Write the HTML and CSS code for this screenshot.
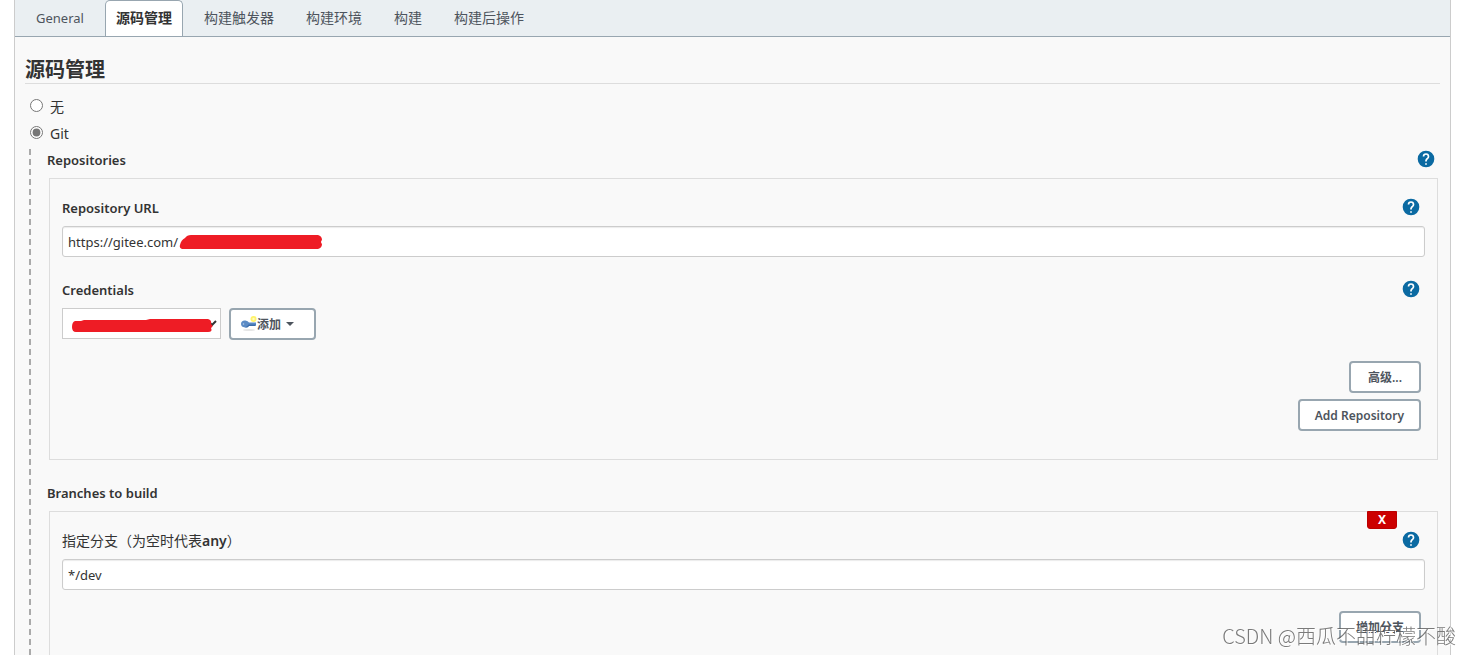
FILE: index.html
```
<!DOCTYPE html>
<html lang="zh-CN">
<head>
    <meta charset="UTF-8">
    <meta name="viewport" content="width=device-width, initial-scale=1.0">
    <title>源码管理</title>
    <link rel="stylesheet" href="styles.css">
</head>
<body>
    <svg class="sprite" aria-hidden="true">
        <symbol id="icon-help" viewBox="0 0 24 24">
            <path fill="#0b6aa2" d="M12 2a10 10 0 1 0 0 20 10 10 0 0 0 0-20z"/>
            <path fill="#fff" d="M11 17h2v2h-2zM12 5a4 4 0 0 0-4 4h2a2 2 0 1 1 4 0c0 2-3 1.750-3 6h2c0-2.750 3-3 3-6a4 4 0 0 0-4-4z"/>
        </symbol>
    </svg>

    <main class="config">
        <nav class="tab-bar">
            <a class="tab" href="#general">General</a>
            <a class="tab active" href="#scm">源码管理</a>
            <a class="tab" href="#triggers">构建触发器</a>
            <a class="tab" href="#environment">构建环境</a>
            <a class="tab" href="#build">构建</a>
            <a class="tab" href="#post-build">构建后操作</a>
        </nav>

        <section class="config-body" id="scm">
            <h1 class="section-title">源码管理</h1>

            <div class="radio-row">
                <input type="radio" name="scm" id="scm-none">
                <label for="scm-none">无</label>
            </div>
            <div class="radio-row">
                <input type="radio" name="scm" id="scm-git" checked>
                <label for="scm-git">Git</label>
            </div>

            <div class="nested">
                <div class="field-head">
                    <span class="field-label">Repositories</span>
                    <button class="help" type="button" aria-label="Help"><svg><use href="#icon-help"/></svg></button>
                </div>
                <div class="chunk">
                    <div class="field-head">
                        <label class="field-label" for="repo-url">Repository URL</label>
                        <button class="help" type="button" aria-label="Help"><svg><use href="#icon-help"/></svg></button>
                    </div>
                    <div class="field">
                        <input class="text-input" type="text" id="repo-url" value="https://gitee.com/">
                        <svg class="mask mask-url" viewBox="0 0 144 16" aria-hidden="true">
                            <path fill="#ee1c25" d="M1 11Q2 6 6 4Q8 1 12 1H139Q143 2 143 6Q141 8 143 10Q143 14 139 15H3Q0 14 1 11z"/>
                        </svg>
                    </div>

                    <div class="field-head">
                        <label class="field-label" for="credentials">Credentials</label>
                        <button class="help" type="button" aria-label="Help"><svg><use href="#icon-help"/></svg></button>
                    </div>
                    <div class="field credentials">
                        <select class="select" id="credentials">
                            <option></option>
                        </select>
                        <svg class="mask mask-credentials" viewBox="0 0 142 14" aria-hidden="true">
                            <path fill="#ee1c25" d="M3 2H9L12 1H74L78 0H136Q140 1 139 5Q142 7 139 9Q141 13 136 13H4Q0 13 0 8Q0 3 3 2z"/>
                        </svg>
                        <button class="btn btn-add" type="button">
                            <svg class="icon-key" viewBox="0 0 16 16" aria-hidden="true">
                                <ellipse cx="8" cy="14" rx="6" ry="1" fill="#e6e6e6"/>
                                <path fill="#5b8bc5" d="M0 8C0 5.500 2 4 4.500 4.500Q7 5 8 6.500H15V9L14 10H8Q6.500 12 4 11.500Q0 11 0 8z"/>
                                <path fill="#3a6cab" d="M4 11.500Q7 10 7.500 8.500H15V9L14 10H8Q6.500 12 4 11.500z"/>
                                <circle cx="2.500" cy="8" r="0.800" fill="#b9cfe8"/>
                                <circle cx="12.500" cy="3" r="3" fill="#fff36b"/>
                                <circle cx="12.500" cy="3" r="1.200" fill="#fffbc0"/>
                            </svg>
                            <span>添加</span>
                            <span class="caret"></span>
                        </button>
                    </div>

                    <div class="actions">
                        <button class="btn" type="button">高级...</button>
                        <button class="btn" type="button">Add Repository</button>
                    </div>
                </div>

                <div class="field-head">
                    <span class="field-label">Branches to build</span>
                </div>
                <div class="chunk">
                    <button class="btn-delete" type="button">X</button>
                    <div class="field-head">
                        <label class="field-label label-cn" for="branch">指定分支（为空时代表<b>any</b>）</label>
                        <button class="help" type="button" aria-label="Help"><svg><use href="#icon-help"/></svg></button>
                    </div>
                    <div class="field">
                        <input class="text-input" type="text" id="branch" value="*/dev">
                    </div>
                    <div class="actions">
                        <button class="btn" type="button">增加分支</button>
                    </div>
                </div>
            </div>
        </section>
    </main>

    <div class="watermark">CSDN @西瓜不甜柠檬不酸</div>
</body>
</html>
```
FILE: styles.css
```
* {
    box-sizing: border-box;
}

body {
    height: 100vh;
    margin: 0;
    overflow: hidden;
    background-color: #fff;
    color: #333;
    font-family: "Noto Sans", "Noto Sans CJK SC", sans-serif;
    font-size: 13px;
    line-height: 22px;
}

.sprite {
    display: none;
}

.config {
    height: 100%;
    margin: 0 20px 0 14px;
    overflow: hidden;
    border: 1px solid #ccc;
    border-width: 0 1px;
    background-color: #f9f9f9;
}

/* tabs */
.tab-bar {
    display: flex;
    height: 37px;
    padding-left: 10px;
    background-color: #eaeff2;
    border-bottom: 1px solid #98a6b0;
}

.tab {
    height: 36px;
    margin-right: 10px;
    padding: 0 10px;
    border: 1px solid transparent;
    border-bottom: 0;
    color: #4d545d;
    font-size: 14px;
    line-height: 34px;
    text-decoration: none;
}

.tab:first-child {
    font-size: 13px;
}

.tab.active {
    background-color: #fff;
    border-color: #98a6b0;
    border-radius: 5px 5px 0 0;
    color: #333;
    font-weight: bold;
}

/* form */
.config-body {
    padding: 20px 10px;
}

.section-title {
    margin: 0 0 9px;
    border-bottom: 1px solid #ddd;
    font-size: 20px;
    line-height: 26px;
}

.radio-row {
    display: flex;
    align-items: center;
    height: 27px;
    padding-left: 5px;
}

.radio-row input {
    width: 13px;
    height: 13px;
    margin: 0 7px 3px 0;
    accent-color: #767676;
}

.radio-row label {
    font-size: 14px;
}

.nested {
    margin: 2px 0 0 4px;
    padding: 0 2px 0 20px;
    background: repeating-linear-gradient(#aaa 0 6px, transparent 6px 10px) left top / 2px 100% no-repeat;
}

.field-head {
    display: flex;
    align-items: center;
    justify-content: space-between;
    height: 22px;
    margin-bottom: 7px;
    padding-right: 4px;
}

.nested > .field-head {
    margin-left: -2px;
    padding-right: 2px;
}

.field-label {
    font-weight: 600;
}

.label-cn {
    font-size: 14px;
    font-weight: normal;
}

.label-cn b {
    font-weight: 600;
}

.help {
    width: 20px;
    height: 20px;
    margin-bottom: 2px;
    padding: 0;
    border: 0;
    background: none;
}

.help svg {
    display: block;
    width: 20px;
    height: 20px;
}

.chunk {
    position: relative;
    margin-bottom: 22px;
    padding: 18px 12px 28px;
    border: 1px solid #ddd;
}

.field {
    position: relative;
    margin-bottom: 22px;
}

.text-input,
.select {
    display: block;
    height: 31px;
    border: 1px solid #ccc;
    background-color: #fff;
    color: #333;
    font-family: inherit;
    font-size: 13px;
}

.text-input {
    width: 100%;
    padding: 0 5px;
    border-radius: 3px;
    box-shadow: inset 0 1px 1px rgba(0, 0, 0, 0.08);
}

.select {
    width: 159px;
}

.credentials {
    display: flex;
    gap: 8px;
}

.mask {
    position: absolute;
}

.mask-url {
    top: 8px;
    left: 117px;
    width: 144px;
    height: 16px;
}

.mask-credentials {
    top: 11px;
    left: 10px;
    width: 142px;
    height: 14px;
}

/* buttons */
.btn {
    height: 32px;
    min-width: 72px;
    padding: 0 15px;
    border: 2px solid #98a6b0;
    border-radius: 4px;
    background-color: #fff;
    color: #4d545d;
    font-family: inherit;
    font-size: 12px;
    font-weight: 600;
}

.btn-add {
    display: flex;
    align-items: center;
    width: 87px;
    padding: 0 10px;
}

.icon-key {
    width: 16px;
    height: 16px;
}

.caret {
    margin-left: 5px;
    border: 4px solid transparent;
    border-top-color: #4d545d;
    border-bottom: 0;
}

.actions {
    display: flex;
    flex-direction: column;
    align-items: flex-end;
    gap: 6px;
    margin-top: -1px;
    padding-right: 4px;
}

.btn-delete {
    position: absolute;
    top: -1px;
    right: 40px;
    width: 30px;
    height: 18px;
    padding: 0;
    border: 1px solid #b00;
    border-radius: 0 0 3px 3px;
    background-color: #c00;
    color: #fff;
    font-family: inherit;
    font-size: 12px;
    font-weight: bold;
    line-height: 16px;
}

.watermark {
    position: fixed;
    right: 15px;
    bottom: 4px;
    color: rgba(90, 90, 90, 0.8);
    font-family: "Noto Sans CJK SC", sans-serif;
    font-size: 20px;
    font-weight: 300;
    line-height: 30px;
    text-shadow: 1px 1px 0 #fff;
}
```
